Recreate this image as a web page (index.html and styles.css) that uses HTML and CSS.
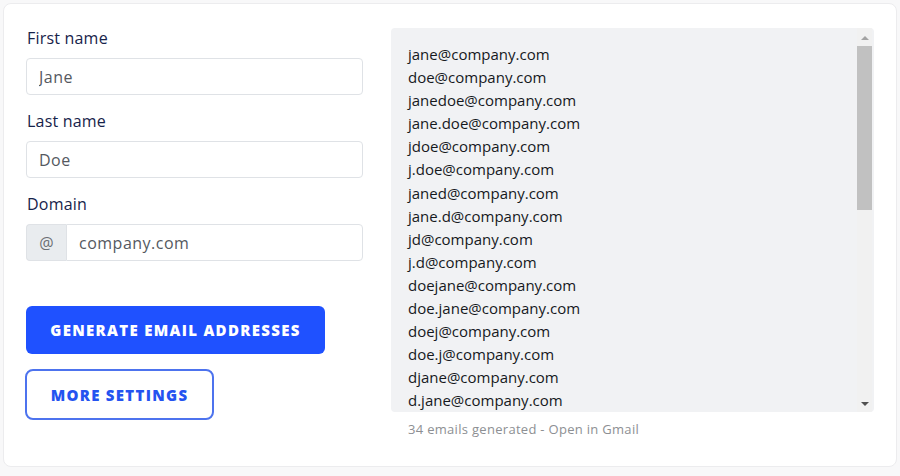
FILE: index.html
```html
<!DOCTYPE html>
<html lang="en">
<head>
<meta charset="utf-8">
<title>Email generator</title>
<link rel="stylesheet" href="styles.css">
</head>
<body>
<div class="card">
  <form class="form">
    <label class="label" for="first">First name</label>
    <input class="input" id="first" type="text" value="Jane">
    <label class="label" for="last">Last name</label>
    <input class="input" id="last" type="text" value="Doe">
    <label class="label" for="domain">Domain</label>
    <div class="group">
      <span class="addon">@</span>
      <input class="input group-input" id="domain" type="text" value="company.com">
    </div>
    <button type="button" class="btn btn-primary">Generate email addresses</button>
    <button type="button" class="btn btn-outline">More settings</button>
  </form>
  <div class="results">
    <div class="panel">
      <textarea class="output" readonly>jane@company.com
doe@company.com
janedoe@company.com
jane.doe@company.com
jdoe@company.com
j.doe@company.com
janed@company.com
jane.d@company.com
jd@company.com
j.d@company.com
doejane@company.com
doe.jane@company.com
doej@company.com
doe.j@company.com
djane@company.com
d.jane@company.com
dj@company.com
d.j@company.com
jane_doe@company.com
doe_jane@company.com
jane-doe@company.com
doe-jane@company.com
j_doe@company.com
j-doe@company.com
jane_d@company.com
jane-d@company.com
doe_j@company.com
doe-j@company.com
d_jane@company.com
d-jane@company.com
j_d@company.com
j-d@company.com
d_j@company.com
d-j@company.com</textarea>
      <div class="scrollbar" aria-hidden="true">
        <div class="sb-btn"><span class="arrow-up"></span></div>
        <div class="sb-track"><div class="sb-thumb"></div></div>
        <div class="sb-btn"><span class="arrow-down"></span></div>
      </div>
    </div>
    <p class="meta">34 emails generated - <a class="meta-link" href="#">Open in Gmail</a></p>
  </div>
</div>
</body>
</html>
```
FILE: styles.css
```css
* { box-sizing: border-box; }
html, body { margin: 0; padding: 0; }
body {
  background: #f8f8f9;
  font-family: "Open Sans", "DejaVu Sans", sans-serif;
  padding: 3px 3px 0 3px;
}
.card {
  width: 894px;
  height: 464px;
  background: #fff;
  border: 1px solid #ececee;
  border-radius: 8px;
  padding: 23px 21px 0 22px;
  display: flex;
  gap: 28px;
}
.form {
  width: 337px;
  display: flex;
  flex-direction: column;
  margin: 0;
}
.label {
  font-size: 16px;
  line-height: 22px;
  letter-spacing: 0.2px;
  color: #17234a;
  margin: 0 0 9px 1px;
}
.input {
  height: 37px;
  border: 1px solid #dfe2e6;
  border-radius: 4px;
  padding: 0 12px;
  font-family: inherit;
  font-size: 16px;
  letter-spacing: 0.5px;
  color: #55595f;
  background: #fff;
  margin: 0 0 15px 0;
  outline: none;
}
.group {
  display: flex;
  height: 37px;
}
.addon {
  width: 40px;
  display: flex;
  align-items: center;
  justify-content: center;
  background: #e9ecef;
  border: 1px solid #dfe2e6;
  border-right: none;
  border-radius: 4px 0 0 4px;
  color: #6c6f74;
  font-size: 16px;
}
.group-input {
  flex: 1;
  margin: 0;
  border-radius: 0 4px 4px 0;
  height: 37px;
}
.btn {
  font-family: inherit;
  font-weight: 800;
  font-size: 15px;
  letter-spacing: 1.3px;
  text-transform: uppercase;
  cursor: pointer;
  align-self: flex-start;
}
.btn-primary {
  margin-top: 45px;
  height: 48px;
  padding: 0;
  width: 299px;
  background: #1f51ff;
  color: #fff;
  border: none;
  border-radius: 6px;
}
.btn-outline {
  margin-top: 15px;
  height: 51px;
  width: 189px;
  margin-left: -1px;
  padding: 0;
  background: #fff;
  color: #2453f0;
  border: 2px solid #4d73ee;
  border-radius: 8px;
}
.results {
  flex: 1;
  display: flex;
  flex-direction: column;
  padding-top: 1px;
}
.panel {
  width: 483px;
  height: 384px;
  display: flex;
  background: #f1f2f4;
  border-radius: 4px;
  padding-right: 2px;
  overflow: hidden;
}
.output {
  flex: 1;
  height: 100%;
  resize: none;
  border: none;
  background: transparent;
  color: #16191d;
  font-family: inherit;
  font-size: 15px;
  line-height: 23.1px;
  padding: 15px 17px 0 17px;
  overflow: hidden;
  outline: none;
}
.scrollbar {
  width: 15px;
  display: flex;
  flex-direction: column;
  background: #f1f1f1;
}
.sb-btn {
  height: 18px;
  display: flex;
  align-items: center;
  justify-content: center;
}
.arrow-up {
  width: 0;
  height: 0;
  border-left: 4px solid transparent;
  border-right: 4px solid transparent;
  border-bottom: 4px solid #a3a3a3;
  margin-top: 2px;
}
.arrow-down {
  width: 0;
  height: 0;
  border-left: 4px solid transparent;
  border-right: 4px solid transparent;
  border-top: 4px solid #505050;
  margin-bottom: -2px;
}
.sb-track {
  flex: 1;
}
.sb-thumb {
  height: 164px;
  background: #c1c1c1;
}
.meta {
  margin: 8px 0 0 17px;
  font-size: 13px;
  line-height: 18px;
  letter-spacing: 0.3px;
  color: #8d8f93;
}
.meta-link {
  color: #8d8f93;
  text-decoration: none;
}
```
